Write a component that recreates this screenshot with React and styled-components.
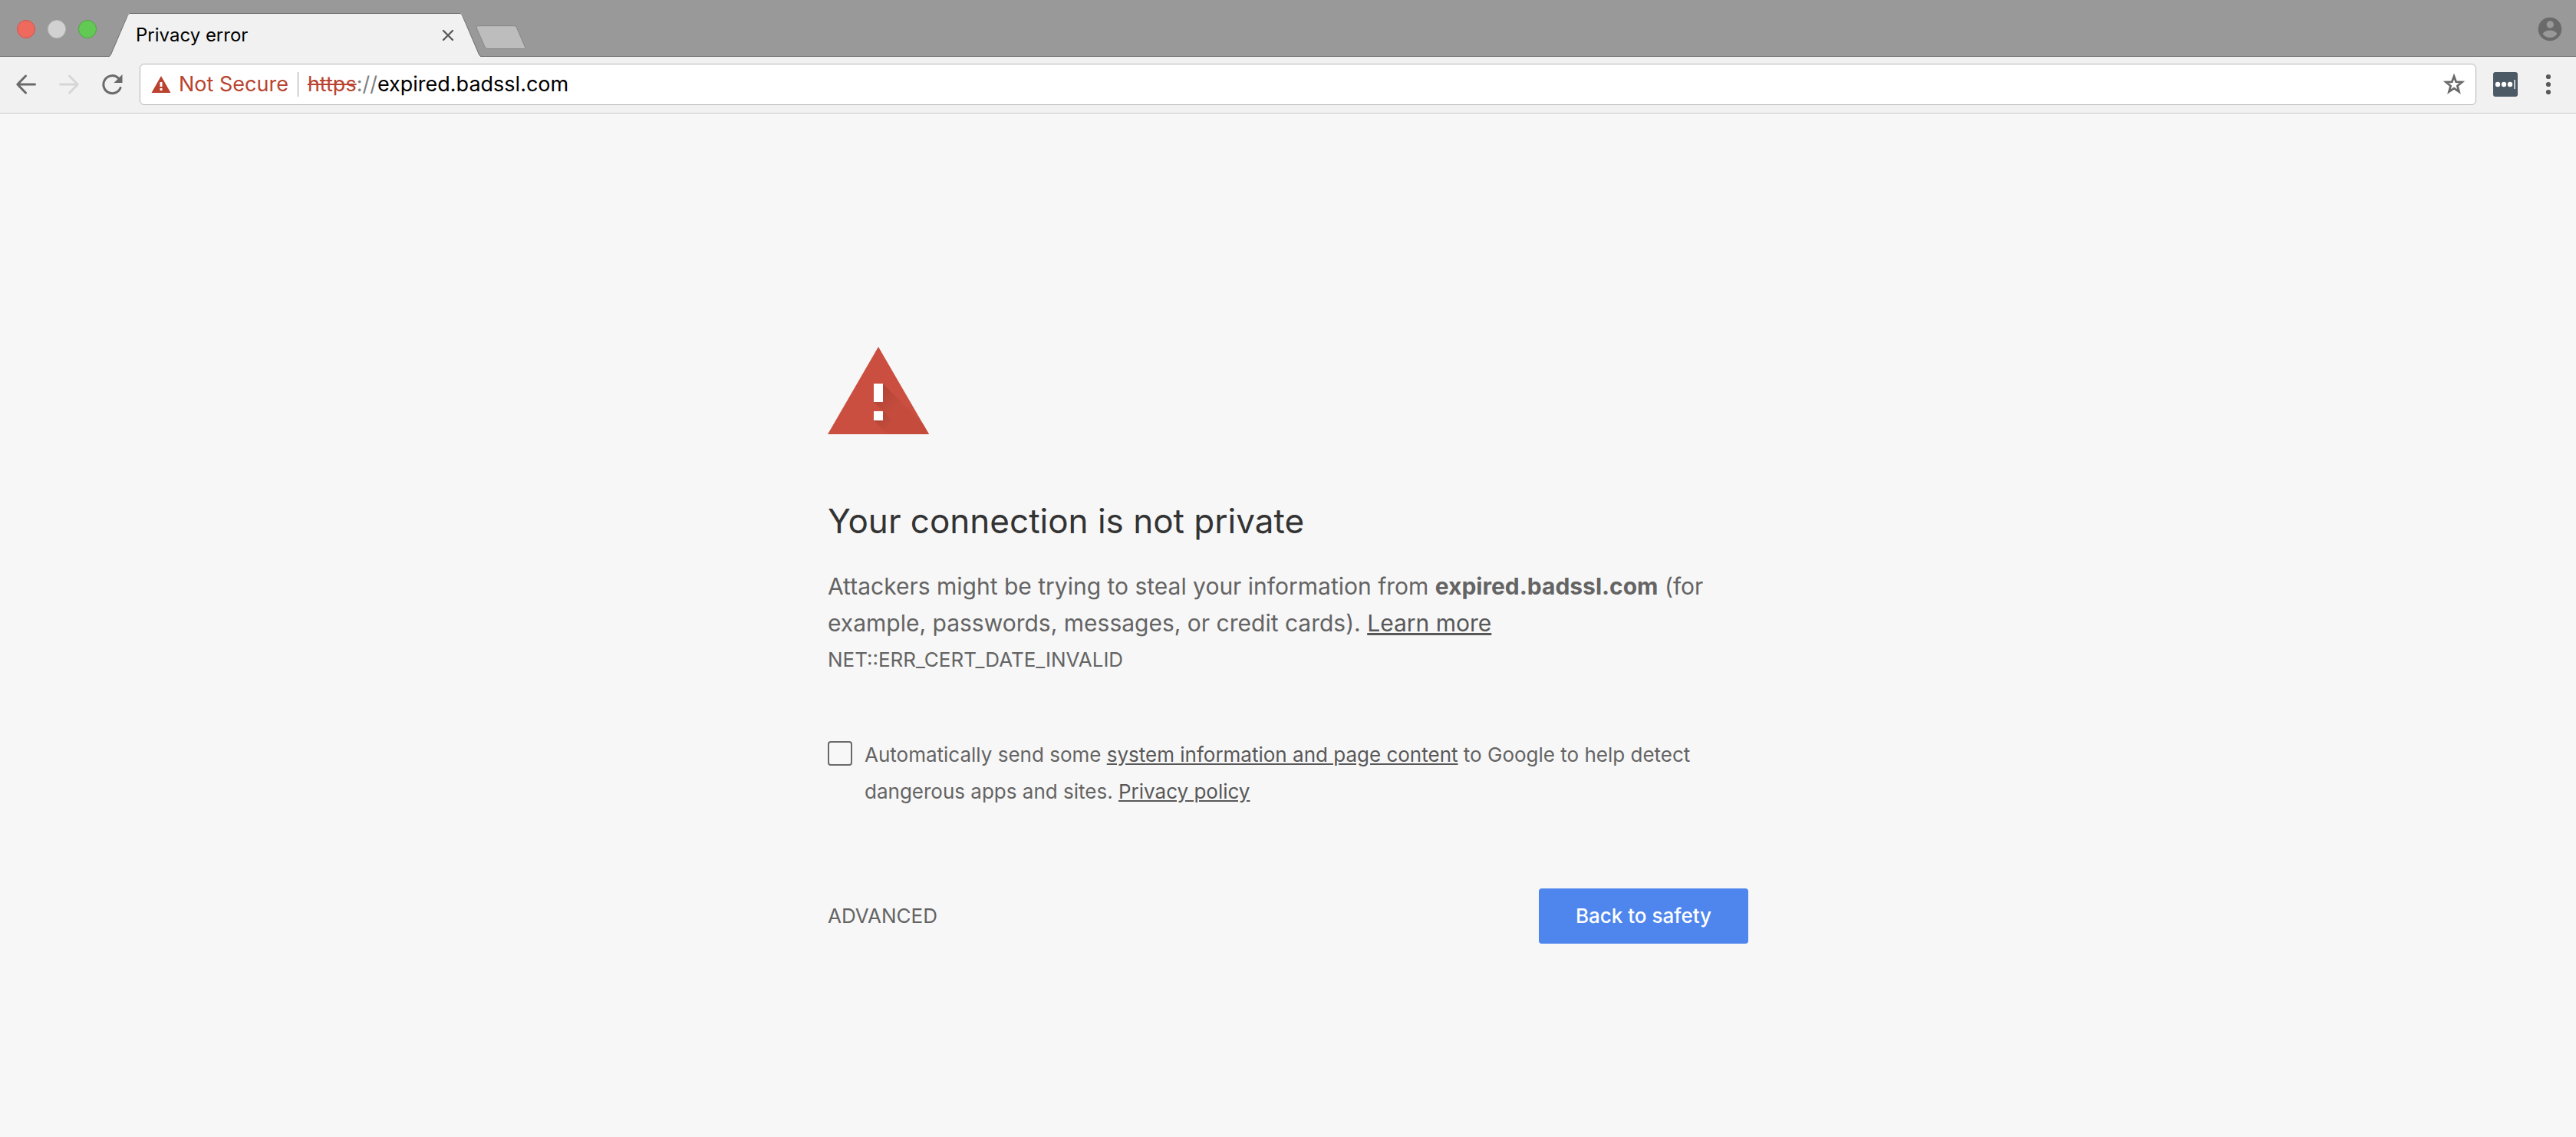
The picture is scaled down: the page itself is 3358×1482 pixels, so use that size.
import React, { useState } from "react";
import styled, { createGlobalStyle } from "styled-components";

const App = () => {
  const [url, setUrl] = useState("expired.badssl.com");
  const [report, setReport] = useState(false);

  return (
    <>
      <GlobalStyle />
      <TitleBar>
        <Lights>
          <Light $fill="#ee6a5f" $edge="#d5544a" aria-label="Close window" />
          <Light $fill="#d1d1d1" $edge="#bcbcbc" aria-label="Minimize window" />
          <Light $fill="#62c955" $edge="#50a73e" aria-label="Zoom window" />
        </Lights>
        <Tab>
          <TabEdge viewBox="0 0 27 57" aria-hidden="true">
            <path d="M0 57 C2 56 2 55 3 53 L24 3 Q25 0 27 0 V57 Z" fill="#f1f1f1" />
            <path d="M0 56.5 C1.500 56 2 55 3 53 L24 4 Q25.500 .5 27 .5" fill="none" stroke="#6a6a6a" />
          </TabEdge>
          <TabBody>
            <TabTitle>Privacy error</TabTitle>
            <PlainButton aria-label="Close tab">
              <svg width="16" height="16" viewBox="0 0 16 16">
                <path d="M2 2 14 14M14 2 2 14" stroke="#5a5a5a" strokeWidth="2.400" strokeLinecap="round" />
              </svg>
            </PlainButton>
          </TabBody>
          <TabEdge viewBox="0 0 27 57" aria-hidden="true">
            <path d="M27 57 C25 56 25 55 24 53 L3 3 Q2 0 0 0 V57 Z" fill="#f1f1f1" />
            <path d="M27 56.5 C25.500 56 25 55 24 53 L3 4 Q1.500 .5 0 .5" fill="none" stroke="#6a6a6a" />
          </TabEdge>
        </Tab>
        <NewTab aria-label="New tab">
          <svg width="66" height="32" viewBox="0 0 66 32">
            <path
              d="M3 .7H50Q52.500 .7 53.500 3L64 27.500Q65.500 30.500 62.500 30.500H16Q13.500 30.500 12 28L1.500 4Q.3 .7 3 .7Z"
              fill="#bdbdbd"
              stroke="#888"
            />
          </svg>
        </NewTab>
        <Profile aria-label="Profile">
          <svg width="32" height="32" viewBox="0 0 32 32">
            <circle cx="16" cy="16" r="15.300" fill="#6a6a6a" />
            <circle cx="16.300" cy="10" r="4.700" fill="#999" />
            <path d="M6.500 22C9 18.500 12.500 17.500 16 17.500S23 18.500 25.500 22C23 25.500 20 27 16 27S9 25.500 6.500 22Z" fill="#999" />
          </svg>
        </Profile>
      </TitleBar>

      <Toolbar>
        <Nav>
          <PlainButton aria-label="Back">
            <svg width="28" height="28" viewBox="0 0 28 28">
              <path d="M25.500 14H3M13.500 3 2.800 14 13.500 25" fill="none" stroke="#6a6a6a" strokeWidth="3" strokeLinecap="round" strokeLinejoin="round" />
            </svg>
          </PlainButton>
          <PlainButton aria-label="Forward" disabled>
            <svg width="28" height="28" viewBox="0 0 28 28">
              <path d="M2.500 14H25M14.500 3 25.200 14 14.500 25" fill="none" stroke="#d6d6d6" strokeWidth="3" strokeLinecap="round" strokeLinejoin="round" />
            </svg>
          </PlainButton>
          <PlainButton aria-label="Reload">
            <svg width="28" height="28" viewBox="0 0 28 28">
              <path d="M25 18.500A11.500 11.500 0 1 1 22.500 6" fill="none" stroke="#6a6a6a" strokeWidth="3" strokeLinecap="round" />
              <path d="M27.500 1V12H16.500Z" fill="#6a6a6a" />
            </svg>
          </PlainButton>
        </Nav>
        <AddressBar>
          <Security type="button">
            <svg width="26" height="24" viewBox="0 0 26 24">
              <path d="M13 1 25.500 23H.5Z" fill="#b9432f" />
              <path d="M11.500 9H14.500V15H11.500ZM11.500 17H14.500V20H11.500Z" fill="#fff" />
            </svg>
            Not Secure
          </Security>
          <Scheme>
            <s>https</s>://
          </Scheme>
          <UrlInput
            aria-label="Address"
            spellCheck={false}
            value={url}
            onChange={(e) => setUrl(e.target.value)}
          />
          <PlainButton type="button" aria-label="Bookmark this page">
            <svg width="30" height="30" viewBox="0 0 30 30">
              <path
                d="M15 4.500 17.700 11.700 25.500 12 19.400 16.900 21.500 24.500 15 20.200 8.500 24.500 10.600 16.900 4.500 12 12.300 11.700Z"
                fill="none"
                stroke="#6a6a6a"
                strokeWidth="2.800"
              />
            </svg>
          </PlainButton>
        </AddressBar>
        <PlainButton aria-label="Password manager">
          <svg width="32" height="32" viewBox="0 0 32 32">
            <rect width="32" height="32" rx="3" fill="#4c5a65" />
            <circle cx="6" cy="16" r="3.200" fill="#fff" />
            <circle cx="14" cy="16" r="3.200" fill="#fff" />
            <circle cx="22" cy="16" r="3.200" fill="#fff" />
            <rect x="27" y="10" width="2" height="12" fill="#c3c8cc" />
          </svg>
        </PlainButton>
        <PlainButton aria-label="Menu">
          <svg width="8" height="28" viewBox="0 0 8 28">
            <circle cx="4" cy="4" r="3.100" fill="#5a5a5a" />
            <circle cx="4" cy="14" r="3.100" fill="#5a5a5a" />
            <circle cx="4" cy="24" r="3.100" fill="#5a5a5a" />
          </svg>
        </PlainButton>
      </Toolbar>

      <Main>
        <WarningIcon viewBox="0 0 132 114" aria-hidden="true">
          <defs>
            <linearGradient id="barShade" gradientUnits="userSpaceOnUse" x1="60" y1="60" x2="85" y2="85">
              <stop offset="0" stopColor="#b04435" />
              <stop offset="1" stopColor="#c54c3d" />
            </linearGradient>
            <linearGradient id="dotShade" gradientUnits="userSpaceOnUse" x1="76" y1="76" x2="93" y2="93">
              <stop offset="0" stopColor="#b04435" />
              <stop offset="1" stopColor="#c54c3d" />
            </linearGradient>
            <clipPath id="tri">
              <path d="M66 0 132 114H0Z" />
            </clipPath>
          </defs>
          <path d="M66 0 132 114H0Z" fill="#cb4f40" />
          <g clipPath="url(#tri)">
            <path d="M72 48 138 114H102L60 72Z" fill="url(#barShade)" />
            <path d="M72 84 102 114H78L60 96Z" fill="url(#dotShade)" />
          </g>
          <path d="M60 48H72V72H60ZM60 84H72V96H60Z" fill="#fff" />
        </WarningIcon>
        <Title>Your connection is not private</Title>
        <Message>
          Attackers might be trying to steal your information from{" "}
          <strong>expired.badssl.com</strong> (for example, passwords, messages,
          or credit cards). <TextLink href="#learn">Learn more</TextLink>
        </Message>
        <ErrorCode>NET::ERR_CERT_DATE_INVALID</ErrorCode>
        <OptIn>
          <Checkbox
            id="report"
            type="checkbox"
            checked={report}
            onChange={(e) => setReport(e.target.checked)}
          />
          <label htmlFor="report">
            Automatically send some{" "}
            <TextLink href="#system">system information and page content</TextLink>{" "}
            to Google to help detect dangerous apps and sites.{" "}
            <TextLink href="#privacy">Privacy policy</TextLink>
          </label>
        </OptIn>
        <Actions>
          <Advanced>ADVANCED</Advanced>
          <Primary>Back to safety</Primary>
        </Actions>
      </Main>
    </>
  );
};

export default App;

const GlobalStyle = createGlobalStyle`
  * {
    box-sizing: border-box;
  }
  body {
    margin: 0;
    background: #f7f7f7;
    color: #646464;
    font-family: Inter, "Liberation Sans", sans-serif;
  }
  button, input {
    font-family: inherit;
  }
  svg {
    display: block;
  }
`;

const PlainButton = styled.button`
  padding: 0;
  border: 0;
  background: none;
  cursor: pointer;
`;

const TitleBar = styled.header`
  display: flex;
  align-items: flex-end;
  height: 74px;
  background: linear-gradient(#6a6a6a, #6a6a6a) bottom / 100% 1px no-repeat #999;
`;

const Lights = styled.div`
  display: flex;
  gap: 16px;
  padding: 0 16px 24px 22px;
`;

const Light = styled.button`
  width: 24px;
  height: 24px;
  padding: 0;
  border: 1px solid ${(props) => props.$edge};
  border-radius: 50%;
  background: ${(props) => props.$fill};
`;

const Tab = styled.div`
  display: flex;
  height: 57px;
`;

const TabEdge = styled.svg`
  width: 27px;
  height: 57px;
`;

const TabBody = styled.div`
  display: flex;
  align-items: center;
  justify-content: space-between;
  width: 431px;
  padding: 0 8px;
  border-top: 1px solid #6a6a6a;
  background: #f1f1f1;
`;

const TabTitle = styled.span`
  font-size: 24px;
  line-height: 28px;
  color: #000;
`;

const NewTab = styled(PlainButton)`
  margin: 0 auto 9px -7px;
`;

const Profile = styled(PlainButton)`
  margin: 0 18px 20px 0;
`;

const Toolbar = styled.div`
  display: flex;
  align-items: center;
  gap: 22px;
  height: 74px;
  padding: 0 32px 1px 20px;
  border-bottom: 1px solid #cdcdcd;
  background: #f1f1f1;
  & > :last-child {
    margin-left: 14px;
  }
`;

const Nav = styled.nav`
  display: flex;
  gap: 28px;
`;

const AddressBar = styled.form`
  display: flex;
  align-items: center;
  flex: 1;
  height: 54px;
  padding: 0 13px 0 14px;
  border: 1px solid #b4b4b4;
  border-radius: 6px;
  background: #fff;
  font-size: 27px;
  line-height: 32px;
`;

const Security = styled(PlainButton)`
  display: flex;
  align-items: center;
  gap: 10px;
  padding-right: 12px;
  margin-right: 12px;
  border-right: 1px solid #a0a0a0;
  font-size: 27px;
  line-height: 32px;
  color: #b9432f;
`;

const Scheme = styled.span`
  color: #808080;
  s {
    color: #b9432f;
  }
`;

const UrlInput = styled.input`
  flex: 1;
  min-width: 0;
  padding: 0;
  border: 0;
  outline: 0;
  background: none;
  font-size: 27px;
  line-height: 32px;
  color: #000;
`;

const Main = styled.main`
  max-width: 1200px;
  margin: 0 auto;
  padding: 304px 0 80px;
`;

const WarningIcon = styled.svg`
  width: 132px;
  height: 114px;
`;

const Title = styled.h1`
  margin: 84px 0 32px;
  font-size: 44px;
  line-height: 58px;
  font-weight: 400;
  color: #333;
`;

const Message = styled.p`
  margin: 0;
  font-size: 30px;
  line-height: 48px;
`;

const TextLink = styled.a`
  color: #585858;
`;

const ErrorCode = styled.div`
  font-size: 26px;
  line-height: 48px;
`;

const OptIn = styled.div`
  display: flex;
  align-items: flex-start;
  gap: 16px;
  margin-top: 76px;
  font-size: 26px;
  line-height: 48px;
`;

const Checkbox = styled.input`
  appearance: none;
  flex: none;
  width: 32px;
  height: 32px;
  margin: 6px 0 0;
  border: 2px solid #6a6a6a;
  border-radius: 4px;
  &:checked {
    background: #6a6a6a;
  }
`;

const Actions = styled.div`
  display: flex;
  align-items: center;
  justify-content: space-between;
  margin-top: 102px;
`;

const Advanced = styled(PlainButton)`
  font-size: 26px;
  line-height: 32px;
  color: #646464;
`;

const Primary = styled.button`
  padding: 20px 48px;
  border: 0;
  border-radius: 4px;
  background: #4f86ed;
  color: #fff;
  font-size: 26px;
  line-height: 32px;
  font-weight: 500;
  cursor: pointer;
`;
